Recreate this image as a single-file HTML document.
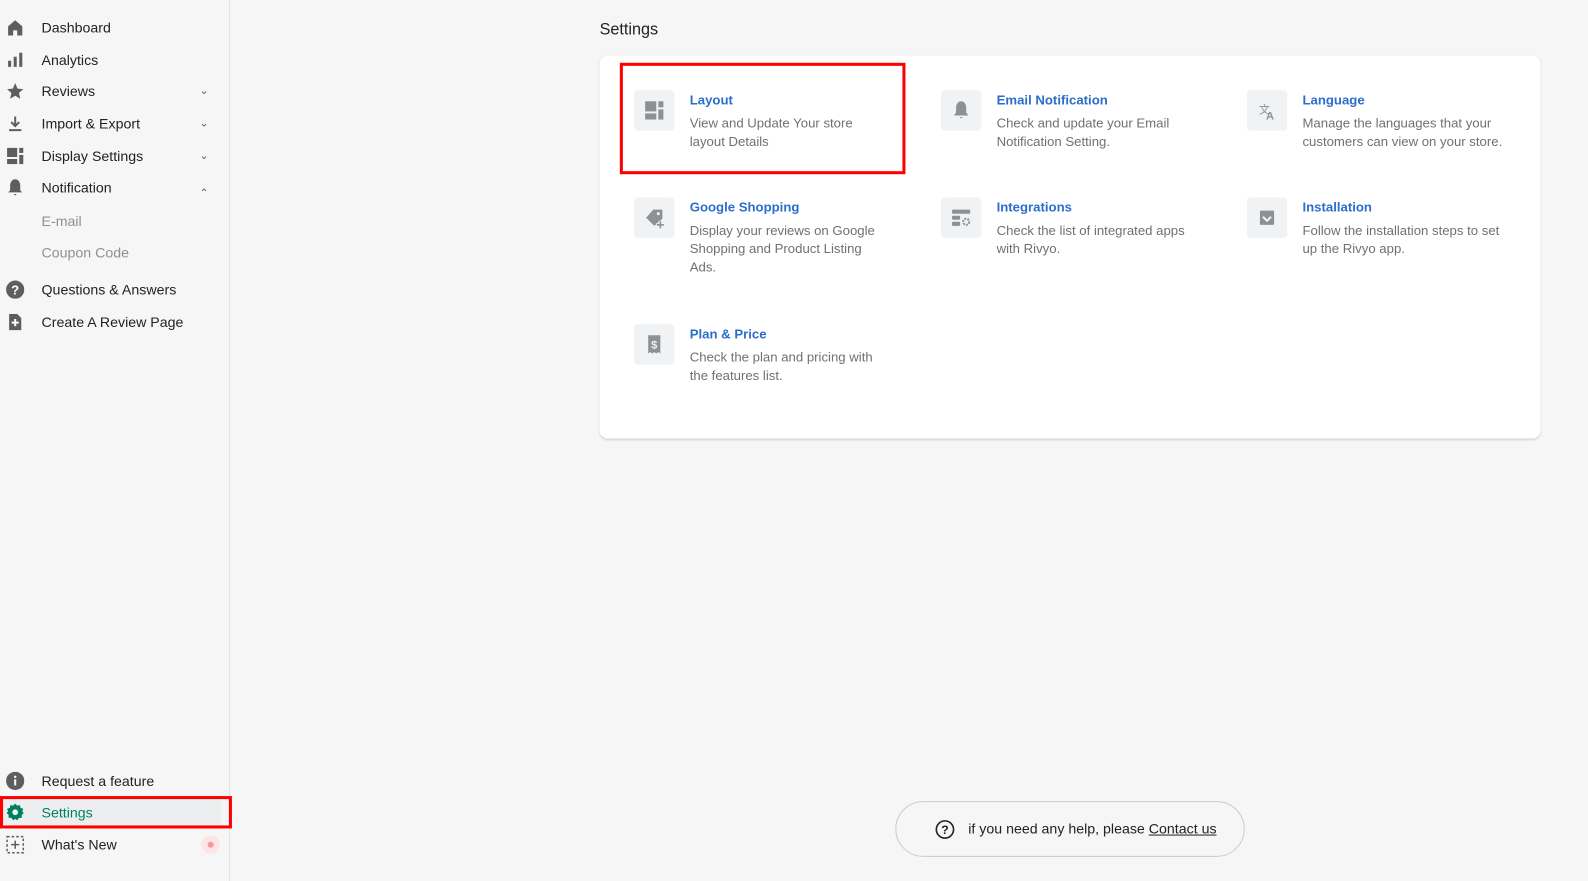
<!DOCTYPE html><html><head><style>
*{box-sizing:border-box;margin:0;padding:0}
body{width:1588px;height:870px;background:#f6f6f6;font-family:"Liberation Sans",sans-serif;overflow:hidden;color:#202223}
#w{position:relative;width:1568px;height:860px;transform:scale(1.0128);transform-origin:0 0}
.sb{position:absolute;left:0;top:0;width:227px;height:870px;border-right:1px solid #e1e3e5}
.it{position:absolute;left:0;height:24px;width:220px;font-size:14px;line-height:24px}
.it .ic{position:absolute;left:6px;top:3px;width:18px;height:18px}
.it .tx{position:absolute;left:41px}
.it .ch{position:absolute;left:197px;top:0;font-size:11px;color:#5c5f62}
.sub{position:absolute;left:41px;font-size:14px;color:#8c9196}
.card{position:absolute;left:592px;top:55px;width:929px;height:378px;background:#fff;border-radius:8px;box-shadow:0 1px 2px rgba(0,0,0,.15)}
.c{position:absolute;width:270px}
.c .ib{position:absolute;left:0;top:0;width:40px;height:40px;background:#f1f2f4;border-radius:4px}
.c .t{position:absolute;left:55px;top:2px;font-size:13px;color:#2c6ecb;font-weight:bold;white-space:nowrap}
.c .d{position:absolute;left:55px;top:24px;font-size:13px;line-height:18px;color:#6d7175;width:200px}
</style></head><body><div id="w">
<div class="sb">
<div class="it" style="top:15px"><svg class="ic" viewBox="0 0 18 18"><path d="M2 8L9 2L16 8V17H11V12H7V17H2Z" fill="#5c5f62"/></svg><span class="tx">Dashboard</span></div>
<div class="it" style="top:47px"><svg class="ic" viewBox="0 0 18 18"><rect x="2" y="10" width="3" height="6" fill="#5c5f62"/><rect x="7.5" y="6" width="3" height="10" fill="#5c5f62"/><rect x="13" y="2" width="3" height="14" fill="#5c5f62"/></svg><span class="tx">Analytics</span></div>
<div class="it" style="top:78px"><svg class="ic" viewBox="0 0 18 18"><path d="M9 1L11.3 6.5L17 7L12.7 10.8L14 16.5L9 13.5L4 16.5L5.3 10.8L1 7L6.7 6.5Z" fill="#5c5f62"/></svg><span class="tx">Reviews</span><span class="ch">&#8964;</span></div>
<div class="it" style="top:110px"><svg class="ic" viewBox="0 0 18 18"><path d="M9 2V11M5 7.5L9 11.5L13 7.5M3 15.5H15" stroke="#5c5f62" stroke-width="2" fill="none"/></svg><span class="tx">Import &amp; Export</span><span class="ch">&#8964;</span></div>
<div class="it" style="top:142px"><svg class="ic" viewBox="0 0 18 18"><rect x="1" y="1" width="10" height="9" fill="#5c5f62"/><rect x="13" y="1" width="4" height="5" fill="#5c5f62"/><rect x="13" y="8" width="4" height="9" fill="#5c5f62"/><rect x="1" y="12" width="10" height="5" fill="#5c5f62"/></svg><span class="tx">Display Settings</span><span class="ch">&#8964;</span></div>
<div class="it" style="top:173px"><svg class="ic" viewBox="0 0 18 18"><path d="M9 1C6 1 4 4 4 7V12L2 14H16L14 12V7C14 4 12 1 9 1Z M7.5 15.5H10.5L9 17Z" fill="#5c5f62"/></svg><span class="tx">Notification</span><span class="ch" style="top:6px">&#8963;</span></div>
<div class="sub" style="top:210px">E-mail</div>
<div class="sub" style="top:241px">Coupon Code</div>
<div class="it" style="top:274px"><svg class="ic" viewBox="0 0 18 18"><circle cx="9" cy="9" r="9" fill="#5c5f62"/><text x="9" y="14" font-size="13" font-weight="bold" fill="#fff" text-anchor="middle" font-family="Liberation Sans">?</text></svg><span class="tx">Questions &amp; Answers</span></div>
<div class="it" style="top:306px"><svg class="ic" viewBox="0 0 18 18"><path d="M3 1H11L15 5V17H3Z" fill="#5c5f62"/><path d="M9 6V13M5.5 9.5H12.5" stroke="#fff" stroke-width="2"/></svg><span class="tx">Create A Review Page</span></div>
<div class="it" style="top:759px"><svg class="ic" viewBox="0 0 18 18"><circle cx="9" cy="9" r="9" fill="#5c5f62"/><rect x="8" y="7.5" width="2" height="6" fill="#fff"/><circle cx="9" cy="5" r="1.2" fill="#fff"/></svg><span class="tx">Request a feature</span></div>
<div style="position:absolute;left:2px;top:788px;width:216px;height:26px;background:#edeeef"></div>
<div class="it" style="top:790px;color:#008060"><svg class="ic" viewBox="0 0 18 18"><path d="M9 0.5L11 2.5L13.7 2L14.3 4.7L17 5.5L16 8L17.5 10L15.5 11.5L15.5 14.5L12.7 14.5L11 17L9 15.5L7 17L5.3 14.5L2.5 14.5L2.5 11.5L0.5 10L2 8L1 5.5L3.7 4.7L4.3 2L7 2.5Z" fill="#008060"/><circle cx="9" cy="9" r="2.8" fill="#f6f6f6"/></svg><span class="tx">Settings</span></div>
<div style="position:absolute;left:0;top:786px;width:229px;height:32px;border:3px solid #f00"></div>
<div class="it" style="top:822px"><svg class="ic" viewBox="0 0 18 18"><rect x="1" y="1" width="16" height="16" fill="none" stroke="#5c5f62" stroke-width="1.5" stroke-dasharray="2.5 2"/><path d="M9 5V13M5 9H13" stroke="#5c5f62" stroke-width="1.5"/></svg><span class="tx">What's New</span><span style="position:absolute;left:199px;top:3px;width:18px;height:18px;border-radius:50%;background:#fde5e5"></span><span style="position:absolute;left:205px;top:9px;width:6px;height:6px;border-radius:50%;background:#f39a9a"></span></div>
</div>
<div style="position:absolute;left:592px;top:21px;font-size:16px">Settings</div>
<div class="card">
<div class="c" style="left:34px;top:34px"><div class="ib"><svg viewBox="0 0 40 40" width="40" height="40"><rect x="11" y="11" width="11" height="10" fill="#8c9196"/><rect x="24" y="11" width="5" height="6" fill="#8c9196"/><rect x="24" y="19" width="5" height="10" fill="#8c9196"/><rect x="11" y="23" width="11" height="6" fill="#8c9196"/></svg></div><div class="t">Layout</div><div class="d" style="width:175px">View and Update Your store layout Details</div></div>
<div class="c" style="left:337px;top:34px"><div class="ib"><svg viewBox="0 0 40 40" width="40" height="40"><path d="M20 11C17 11 15 14 15 17V22L13 25H27L25 22V17C25 14 23 11 20 11Z M18.5 26.5H21.5L20 28Z" fill="#8c9196"/></svg></div><div class="t">Email Notification</div><div class="d">Check and update your Email Notification Setting.</div></div>
<div class="c" style="left:639px;top:34px"><div class="ib"><svg viewBox="0 0 40 40" width="40" height="40"><text x="12" y="23" font-size="11" fill="#8c9196" font-family="Liberation Sans">文</text><text x="19" y="29" font-size="11" font-weight="bold" fill="#8c9196" font-family="Liberation Sans">A</text></svg></div><div class="t">Language</div><div class="d" style="width:210px">Manage the languages that your customers can view on your store.</div></div>
<div class="c" style="left:34px;top:140px"><div class="ib"><svg viewBox="0 0 40 40" width="40" height="40"><path d="M12 20L19 12H28V21L20 28Z" fill="#8c9196"/><circle cx="24" cy="16" r="1.5" fill="#f1f2f4"/><path d="M26 23V31M22 27H30" stroke="#f1f2f4" stroke-width="3.5"/><path d="M26 23.5V30.5M22.5 27H29.5" stroke="#8c9196" stroke-width="1.6"/></svg></div><div class="t">Google Shopping</div><div class="d" style="width:190px">Display your reviews on Google Shopping and Product Listing Ads.</div></div>
<div class="c" style="left:337px;top:140px"><div class="ib"><svg viewBox="0 0 40 40" width="40" height="40"><rect x="11" y="12" width="18" height="4" rx="1" fill="#8c9196"/><rect x="11" y="18" width="8" height="4" rx="1" fill="#8c9196"/><rect x="11" y="24" width="8" height="4" rx="1" fill="#8c9196"/><circle cx="25" cy="24" r="3" fill="none" stroke="#8c9196" stroke-width="2" stroke-dasharray="2 1"/></svg></div><div class="t">Integrations</div><div class="d">Check the list of integrated apps with Rivyo.</div></div>
<div class="c" style="left:639px;top:140px"><div class="ib"><svg viewBox="0 0 40 40" width="40" height="40"><rect x="13" y="13" width="14" height="14" rx="1" fill="#8c9196"/><path d="M16 19L20 23L24 19" stroke="#f1f2f4" stroke-width="2" fill="none"/></svg></div><div class="t">Installation</div><div class="d" style="width:210px">Follow the installation steps to set up the Rivyo app.</div></div>
<div class="c" style="left:34px;top:265px"><div class="ib"><svg viewBox="0 0 40 40" width="40" height="40"><path d="M14 11H26V29L24 27.5L22 29L20 27.5L18 29L16 27.5L14 29Z" fill="#8c9196"/><text x="20" y="24" font-size="11" font-weight="bold" fill="#f1f2f4" text-anchor="middle" font-family="Liberation Sans">$</text></svg></div><div class="t">Plan &amp; Price</div><div class="d">Check the plan and pricing with the features list.</div></div>
</div>
<div style="position:absolute;left:612px;top:62px;width:282px;height:110px;border:3px solid #f00"></div>
<div style="position:absolute;left:884px;top:791px;width:345px;height:55px;border:1px solid #c9cccf;border-radius:28px;background:#f6f6f6;font-size:14px">
<svg style="position:absolute;left:38px;top:17px" width="20" height="20" viewBox="0 0 20 20"><circle cx="10" cy="10" r="8.5" fill="none" stroke="#202223" stroke-width="1.6"/><text x="10" y="14.5" font-size="12" font-weight="bold" fill="#202223" text-anchor="middle" font-family="Liberation Sans">?</text></svg>
<span style="position:absolute;left:71px;top:18px;white-space:nowrap">if you need any help, please <u>Contact us</u></span></div>
</div></body></html>
